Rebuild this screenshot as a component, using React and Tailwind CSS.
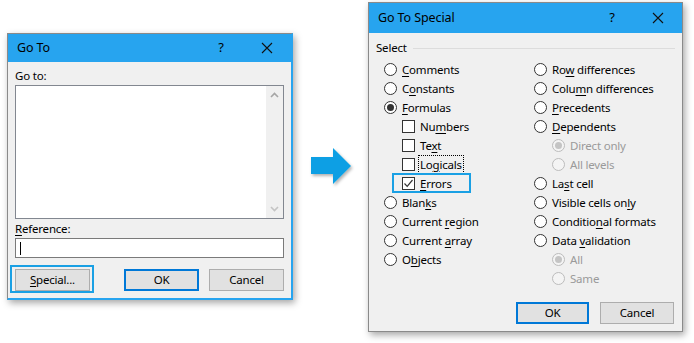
import React from 'react';

const FONT = "font-['Noto_Sans',sans-serif]";

function Mnemonic({ text, u }) {
  if (u === undefined || u < 0) return <span>{text}</span>;
  return (
    <span>
      {text.slice(0, u)}
      <span className="underline decoration-1 underline-offset-[2px]">{text[u]}</span>
      {text.slice(u + 1)}
    </span>
  );
}

function Radio({ checked, disabled }) {
  const ring = disabled
    ? 'border-[#bcbcbc] bg-[#f4f4f4]'
    : 'border-[#333333] bg-white';
  return (
    <span className={`flex h-[13px] w-[13px] shrink-0 items-center justify-center rounded-full border ${ring}`}>
      {checked && (
        <span className={disabled ? 'h-[7px] w-[7px] rounded-full bg-[#c4c4c4]' : 'h-[7px] w-[7px] rounded-full bg-[#333333]'} />
      )}
    </span>
  );
}

function Check({ checked }) {
  return (
    <span className="flex h-[13px] w-[13px] shrink-0 items-center justify-center border border-[#333333] bg-white">
      {checked && (
        <svg width="11" height="11" viewBox="0 0 11 11">
          <path d="M1.5 5.5 L4.2 8.3 L9.5 2" fill="none" stroke="#333" strokeWidth="1.2" />
        </svg>
      )}
    </span>
  );
}

function RadioRow({ text, u, checked, disabled, indent }) {
  return (
    <div className={`flex h-[19px] items-center ${indent ? 'pl-[18px]' : ''}`}>
      <Radio checked={checked} disabled={disabled} />
      <span className={`ml-[5px] ${disabled ? 'text-[#9a9a9a]' : 'text-black'}`}>
        <Mnemonic text={text} u={u} />
      </span>
    </div>
  );
}

function CheckRow({ text, u, checked, focus }) {
  return (
    <div className="flex h-[19px] items-center pl-[18px]">
      <Check checked={checked} />
      <span className={`ml-[4px] px-[1px] ${focus ? 'outline outline-1 outline-dotted outline-black' : ''}`}>
        <Mnemonic text={text} u={u} />
      </span>
    </div>
  );
}

function TitleBar({ title, h }) {
  return (
    <div className={`flex ${h} items-center bg-[#27a4ef] pl-[9px] text-[12.5px] tracking-[-0.1px] text-black`}>
      <span className="flex-1">{title}</span>
      <span className="w-[14px] text-center text-[13px]">?</span>
      <span className="ml-[33px] mr-[18px] flex h-[12px] w-[12px] items-center justify-center">
        <svg width="12" height="12" viewBox="0 0 12 12">
          <path d="M1 1 L11 11 M11 1 L1 11" stroke="#111" strokeWidth="1.1" />
        </svg>
      </span>
    </div>
  );
}

function Button({ children, primary, w }) {
  const edge = primary ? 'border-2 border-[#0078d7]' : 'border border-[#adadad]';
  return (
    <div className={`flex h-[22px] ${w} items-center justify-center bg-[#e1e1e1] ${edge}`}>
      {children}
    </div>
  );
}

function GoToDialog() {
  return (
    <div className="relative mt-[33px] w-[286px] border-l border-t border-r-2 border-b-2 border-l-[#8a8a8a] border-t-[#8a8a8a] border-r-[#27a4ef] border-b-[#27a4ef] bg-[#f0f0f0] shadow-[2px_3px_7px_rgba(0,0,0,0.35)]">
      <TitleBar title="Go To" h="h-[28px]" />
      <div className="px-[7px] pb-[7px] pt-[6px]">
        <div className="h-[16px] leading-[16px]">Go to:</div>
        <div className="mt-[1px] flex h-[134px] border border-[#828790] bg-white">
          <div className="flex-1" />
          <div className="flex w-[17px] flex-col items-center justify-between bg-[#f0f0f0] py-[6px]">
            <svg width="9" height="6" viewBox="0 0 9 6">
              <path d="M1 5 L4.5 1.5 L8 5" fill="none" stroke="#a6a6a6" strokeWidth="1.6" />
            </svg>
            <svg width="9" height="6" viewBox="0 0 9 6">
              <path d="M1 1 L4.5 4.5 L8 1" fill="none" stroke="#c4c4c4" strokeWidth="1.6" />
            </svg>
          </div>
        </div>
        <div className="mt-[2px] h-[16px] leading-[16px]">
          <Mnemonic text="Reference:" u={0} />
        </div>
        <div className="mt-[1px] flex h-[20px] items-center border border-[#7a7a7a] bg-white pl-[4px]">
          <span className="h-[13px] w-px bg-black" />
        </div>
        <div className="mt-[11px] flex items-center">
          <div className="relative">
            <Button w="w-[75px]">
              <Mnemonic text="Special..." u={0} />
            </Button>
            <span className="absolute -bottom-[2px] -left-[5px] -right-[4px] -top-[4px] border-2 border-[#1aa0e4]" />
          </div>
          <div className="ml-auto flex gap-[10px]">
            <Button primary w="w-[75px]">OK</Button>
            <Button w="w-[75px]">Cancel</Button>
          </div>
        </div>
      </div>
    </div>
  );
}

function Arrow() {
  return (
    <svg width="48" height="44" viewBox="0 0 48 44" className="ml-[15px] mt-[144px]">
      <defs>
        <filter id="ash" x="-20%" y="-20%" width="150%" height="150%">
          <feDropShadow dx="1.5" dy="2" stdDeviation="1.5" floodColor="#000" floodOpacity="0.3" />
        </filter>
      </defs>
      <polygon
        points="3,13 25,13 25,4 43,22 25,40 25,30 3,30"
        fill="#0b9fe4"
        filter="url(#ash)"
      />
    </svg>
  );
}

const LEFT = [
  { text: 'Comments', u: 0 },
  { text: 'Constants', u: 1 },
  { text: 'Formulas', u: 0, checked: true },
  { check: true, text: 'Numbers', u: 2 },
  { check: true, text: 'Text', u: 2 },
  { check: true, text: 'Logicals', u: 2, focus: true },
  { check: true, text: 'Errors', u: 0, checked: true, mark: true },
  { text: 'Blanks', u: 4 },
  { text: 'Current region', u: 8 },
  { text: 'Current array', u: 8 },
  { text: 'Objects', u: 1 },
];

const RIGHT = [
  { text: 'Row differences', u: 2 },
  { text: 'Column differences', u: 4 },
  { text: 'Precedents', u: 0 },
  { text: 'Dependents', u: 0 },
  { text: 'Direct only', checked: true, disabled: true, indent: true },
  { text: 'All levels', disabled: true, indent: true },
  { text: 'Last cell', u: 2 },
  { text: 'Visible cells only', u: 16 },
  { text: 'Conditional formats', u: 8 },
  { text: 'Data validation', u: 5 },
  { text: 'All', checked: true, disabled: true, indent: true },
  { text: 'Same', disabled: true, indent: true },
];

function GoToSpecialDialog() {
  return (
    <div className="ml-[12px] mt-[2px] w-[315px] border border-[#8a8a8a] bg-[#f0f0f0] shadow-[2px_3px_7px_rgba(0,0,0,0.35)]">
      <TitleBar title="Go To Special" h="h-[30px]" />
      <div className="pl-[7px] pr-[8px] pt-[7px] pb-[7px]">
        <div className="flex h-[16px] items-center">
          <span className="leading-[16px]">Select</span>
          <span className="ml-[6px] mr-[-1px] h-px flex-1 bg-[#dcdcdc]" />
        </div>
        <div className="mt-[4px] flex pl-[8px]">
          <div className="w-[150px]">
            {LEFT.map((r) =>
              r.check ? (
                <div key={r.text} className="relative">
                  <CheckRow text={r.text} u={r.u} checked={r.checked} focus={r.focus} />
                  {r.mark && (
                    <span className="absolute -top-[1px] left-[8px] h-[20px] w-[79px] border-2 border-[#1aa0e4]" />
                  )}
                </div>
              ) : (
                <RadioRow key={r.text} {...r} />
              )
            )}
          </div>
          <div className="flex-1">
            {RIGHT.map((r) => (
              <RadioRow key={r.text} {...r} />
            ))}
          </div>
        </div>
        <div className="mt-[14px] flex justify-end gap-[11px]">
          <Button primary w="w-[73px]">OK</Button>
          <Button w="w-[74px]">Cancel</Button>
        </div>
      </div>
    </div>
  );
}

export default function App() {
  return (
    <div className={`flex h-[343px] w-[694px] items-start bg-white pl-[7px] text-[11.5px] tracking-[-0.2px] text-black ${FONT}`}>
      <GoToDialog />
      <Arrow />
      <GoToSpecialDialog />
    </div>
  );
}
